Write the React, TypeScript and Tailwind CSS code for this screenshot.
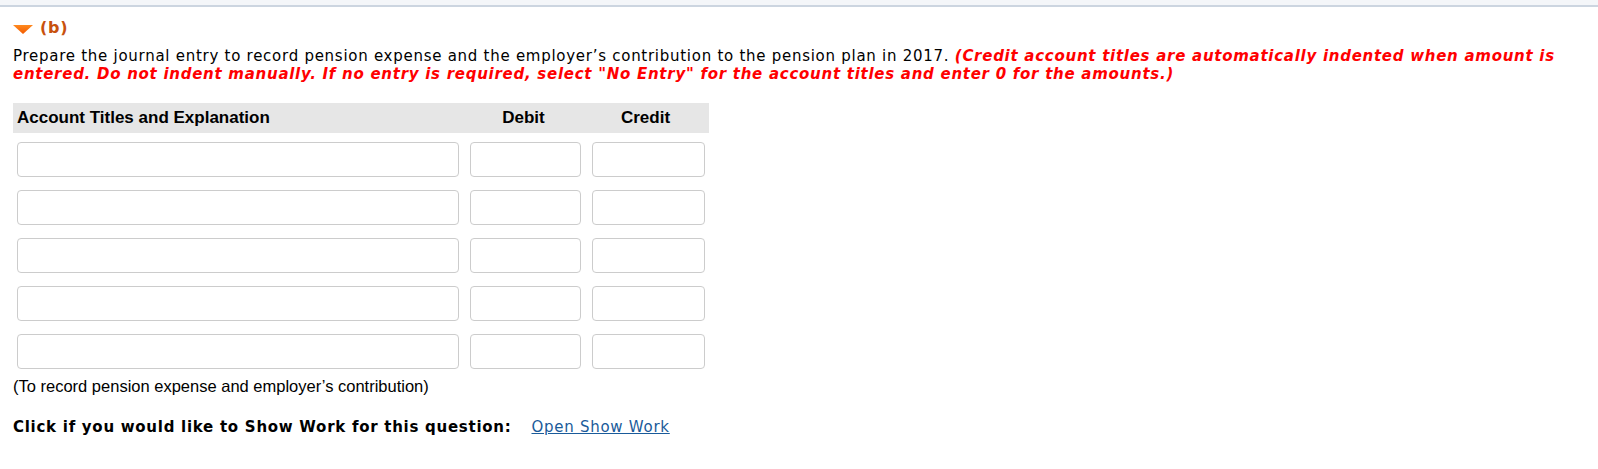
const rows = [0, 1, 2, 3, 4];

const Field = ({ className }: { className: string }) => (
  <input
    type="text"
    className={`h-[35px] rounded-[4px] border border-[#cccccc] bg-white outline-none ${className}`}
  />
);

export default function App() {
  return (
    <div className="min-h-[469px] bg-white font-['DejaVu_Sans',Verdana,sans-serif] text-black">
      <div className="h-[5px] bg-[#f4f6f9]" />
      <div className="h-[2px] bg-[#ccd5e0]" />

      <div className="px-[13px] pt-[11px]">
        <div className="flex h-[20px] items-center gap-[7px]">
          <svg width="20" height="9" viewBox="0 0 20 9" className="mt-[2px]">
            <defs>
              <linearGradient id="tri" x1="0" y1="0" x2="0" y2="1">
                <stop offset="0" stopColor="#ff8a1f" />
                <stop offset="1" stopColor="#f25a00" />
              </linearGradient>
            </defs>
            <polygon points="0,0 20,0 10,9" fill="url(#tri)" />
          </svg>
          <span className="text-[16px] font-bold tracking-[0.8px] text-[#c8520e]">(b)</span>
        </div>

        <p className="mt-[9px] text-[15px] leading-[18px] tracking-[0.73px]">
          Prepare the journal entry to record pension expense and the employer’s contribution to the pension plan in 2017.{" "}
          <span className="font-bold italic text-[#ff0000]">
            (Credit account titles are automatically indented when amount is entered. Do not indent manually. If no entry is required, select "No Entry" for the account titles and enter 0 for the amounts.)
          </span>
        </p>

        <div className="mt-[20px] w-[696px] font-['Liberation_Sans',Arial,sans-serif]">
          <div className="flex h-[30px] items-center bg-[#e6e6e6] text-[17px] font-bold">
            <div className="w-[452px] pl-[4px]">Account Titles and Explanation</div>
            <div className="w-[117px] text-center">Debit</div>
            <div className="w-[127px] text-center">Credit</div>
          </div>

          <div className="mt-[9px] flex flex-col gap-[13px] pl-[4px]">
            {rows.map((r) => (
              <div key={r} className="flex gap-[11px]">
                <Field className="w-[442px]" />
                <Field className="w-[111px]" />
                <Field className="w-[113px]" />
              </div>
            ))}
          </div>

          <p className="mt-[8px] text-[16.5px] leading-[18px]">
            (To record pension expense and employer’s contribution)
          </p>
        </div>

        <div className="mt-[22px] flex h-[20px] items-center text-[15px] tracking-[0.73px]">
          <span className="font-bold">Click if you would like to Show Work for this question:</span>
          <a href="#" className="ml-[20px] text-[#1a5b9a] underline">
            Open Show Work
          </a>
        </div>
      </div>
    </div>
  );
}
